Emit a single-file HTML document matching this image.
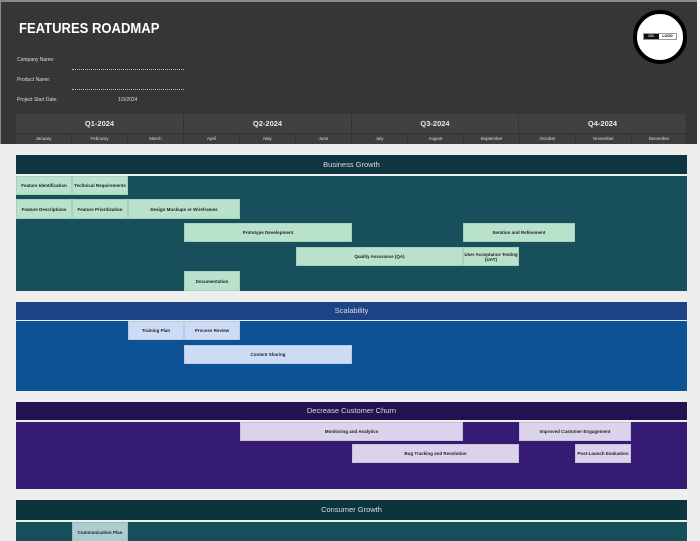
<!DOCTYPE html>
<html><head><style>
*{margin:0;padding:0;box-sizing:border-box}
html,body{width:700px;height:541px;overflow:hidden}
body{background:#eeeeee;position:relative;font-family:"Liberation Sans",sans-serif}
.a{position:absolute}
.hdr{left:0;top:0;width:697px;height:144px;background:#363636;border-top:2px solid #8a8a8a;border-left:1px solid #8a8a8a}
.lbl{color:#ddd;font-size:5px}
.dl{border-top:1px dotted #bbb;height:0}
.q{background:#414141;color:#e8e8e8;font-size:7.5px;font-weight:bold;text-align:center;line-height:19px;border-right:1px solid #333}
.m{background:#3e3e3e;color:#ddd;font-size:4.5px;text-align:center;line-height:10px;border-right:1px solid #333;border-top:1px solid #333}
.sh{left:16px;width:671px;color:#ddd;font-size:7.5px;text-align:center}
.b{font-size:4.5px;font-weight:bold;color:#222;display:flex;align-items:center;justify-content:center;text-align:center;border:1px solid rgba(0,0,0,.08)}
.g{background:#b8e2cc}.s{background:#cddcf6}.c{background:#dbd3eb}.t{background:#a9cdd0}
</style></head><body>
<div class="a hdr"></div>
<div class="a" style="left:19px;top:20px;color:#fff;font-size:15px;font-weight:bold;transform:scaleX(0.87);transform-origin:0 0">FEATURES ROADMAP</div>
<div class="a lbl" style="left:17px;top:57px">Company Name:</div>
<div class="a dl" style="left:72px;top:69px;width:112px"></div>
<div class="a lbl" style="left:17px;top:77px">Product Name:</div>
<div class="a dl" style="left:72px;top:89px;width:112px"></div>
<div class="a lbl" style="left:17px;top:97px">Project Start Date:</div>
<div class="a lbl" style="left:118px;top:97px">1/3/2024</div>
<div class="a" style="left:633px;top:10px;width:54px;height:54px;border-radius:50%;background:#fff;border:4px solid #000"></div>
<div class="a" style="left:643px;top:33px;width:34px;height:7px;border:1px solid #999;display:flex;font-size:3.5px;font-weight:bold">
<div style="width:15px;background:#111;color:#fff;text-align:center;line-height:5px">CO.</div><div style="flex:1;text-align:center;line-height:5px">LOGO</div></div>
<div class="a" style="left:16px;top:114px;width:671px;display:flex">
<div class="q" style="width:168px">Q1-2024</div><div class="q" style="width:168px">Q2-2024</div><div class="q" style="width:167px">Q3-2024</div><div class="q" style="width:168px">Q4-2024</div></div>
<div class="a" style="left:16px;top:133px;width:671px;display:flex">
<div class="m" style="width:56px">January</div><div class="m" style="width:56px">February</div><div class="m" style="width:56px">March</div><div class="m" style="width:56px">April</div><div class="m" style="width:56px">May</div><div class="m" style="width:56px">June</div><div class="m" style="width:56px">July</div><div class="m" style="width:56px">August</div><div class="m" style="width:56px">September</div><div class="m" style="width:56px">October</div><div class="m" style="width:56px">November</div><div class="m" style="width:55px">December</div></div>

<div class="a sh" style="top:155px;height:19px;line-height:19px;background:#0e3540">Business Growth</div>
<div class="a" style="left:16px;top:176px;width:671px;height:115px;background:#17505b"></div>
<div class="a b g" style="left:16px;top:176px;width:56px;height:19px">Feature Identification</div>
<div class="a b g" style="left:72px;top:176px;width:56px;height:19px">Technical Requirements</div>
<div class="a b g" style="left:16px;top:199px;width:56px;height:20px">Feature Descriptions</div>
<div class="a b g" style="left:72px;top:199px;width:56px;height:20px">Feature Prioritization</div>
<div class="a b g" style="left:128px;top:199px;width:112px;height:20px">Design Mockups or Wireframes</div>
<div class="a b g" style="left:184px;top:223px;width:168px;height:19px">Prototype Development</div>
<div class="a b g" style="left:463px;top:223px;width:112px;height:19px">Iteration and Refinement</div>
<div class="a b g" style="left:296px;top:247px;width:167px;height:19px">Quality Assurance (QA)</div>
<div class="a b g" style="left:463px;top:247px;width:56px;height:19px">User Acceptance Testing (UAT)</div>
<div class="a b g" style="left:184px;top:271px;width:56px;height:20px">Documentation</div>

<div class="a sh" style="top:302px;height:18px;line-height:18px;background:#1e4385">Scalability</div>
<div class="a" style="left:16px;top:321px;width:671px;height:70px;background:#0d5294"></div>
<div class="a b s" style="left:128px;top:321px;width:56px;height:19px">Training Plan</div>
<div class="a b s" style="left:184px;top:321px;width:56px;height:19px">Process Review</div>
<div class="a b s" style="left:184px;top:345px;width:168px;height:19px">Content Sharing</div>

<div class="a sh" style="top:402px;height:18px;line-height:18px;background:#21134f">Decrease Customer Churn</div>
<div class="a" style="left:16px;top:422px;width:671px;height:67px;background:#361b74"></div>
<div class="a b c" style="left:240px;top:422px;width:223px;height:19px">Monitoring and Analytics</div>
<div class="a b c" style="left:519px;top:422px;width:112px;height:19px">Improved Customer Engagement</div>
<div class="a b c" style="left:352px;top:444px;width:167px;height:19px">Bug Tracking and Resolution</div>
<div class="a b c" style="left:575px;top:444px;width:56px;height:19px">Post-Launch Evaluation</div>

<div class="a sh" style="top:500px;height:20px;line-height:20px;background:#0c343c">Consumer Growth</div>
<div class="a" style="left:16px;top:522px;width:671px;height:30px;background:#154f5a"></div>
<div class="a b t" style="left:72px;top:522px;width:56px;height:20px">Communication Plan</div>
</body></html>
